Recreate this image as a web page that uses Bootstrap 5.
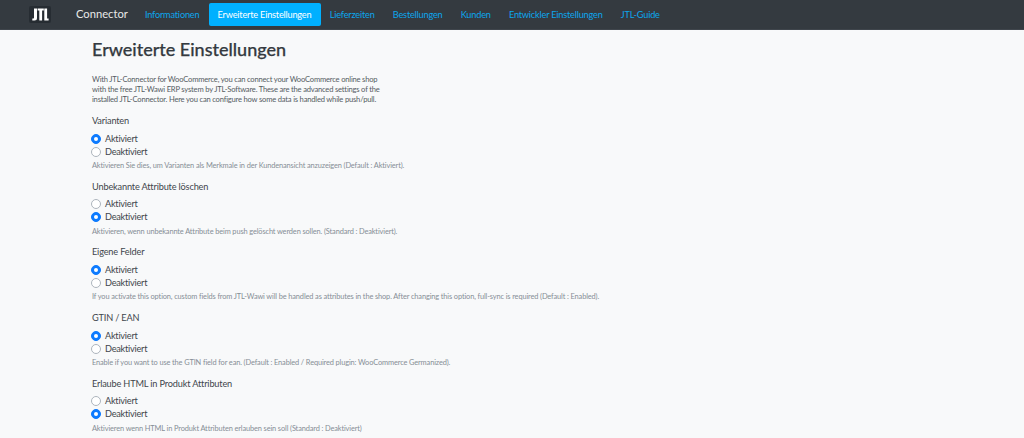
<!DOCTYPE html>
<html lang="de"><head><meta charset="utf-8"><title>Erweiterte Einstellungen</title>
<link href="https://cdn.jsdelivr.net/npm/bootstrap@5.3.0/dist/css/bootstrap.min.css" rel="stylesheet">
<style>
html,body{height:438px;overflow:hidden}
body{background:#f8f9fa;font-family:Lato,"Noto Sans",sans-serif;color:#212529;font-size:9px}
.topbar{background:#343a40;height:29.5px;padding:0 0 0 29px;border-bottom:1px solid #6c757d33}
.logo-mark{width:22px;height:17px;margin-right:25px}
.brand-txt{color:#e8e8e8;font-size:11.2px;margin-right:8px}
.topbar .nav-link{color:#0ca6ee;font-size:9.2px;letter-spacing:-.2px;padding:0 9.1px;height:23px;line-height:23px;border-radius:2px;white-space:nowrap}
.topbar .nav-link.active{background:#00b0ff;color:#fff}
.sheet{padding-left:92px}
.sheet h1{font-size:18px;font-weight:500;-webkit-text-stroke:.25px #343a40;margin:10px 0 16px;line-height:18px;color:#343a40}
.intro{font-size:7.6px;letter-spacing:-.2px;line-height:10.4px;color:#555c63;margin:0 0 10.5px}
.opt-group{margin-bottom:9.6px}
.opt-title{font-size:9.2px;letter-spacing:-.17px;line-height:12px;margin-bottom:5px;color:#3f464c}
.opt-row{display:flex;align-items:center;height:13px;font-size:9.2px;letter-spacing:-.25px;color:#3f464c}
.opt-row .form-check-input{width:10px;height:10px;margin:0 4px 0 -1px;flex:none;background-color:#fff;border:1px solid #adb5bd}
.opt-row .form-check-input:checked{background-color:#0d7bff;border-color:#0d7bff}
.opt-hint{font-size:7.4px;letter-spacing:-.12px;line-height:10px;color:#868e96;margin-top:3px}
</style></head><body>
<nav class="topbar d-flex align-items-center">
<svg class="logo-mark" viewBox="0 0 22 17"><rect width="22" height="17" rx="2" fill="#262c32"/><path fill="#fff" d="M5 2.500h3v9.500c0 1.700-.8 2.500-2.500 2.500H3.300v-2h1c.5 0 .7-.2.7-.7ZM8.600 2.500h6.200v2.100h-1.700v9.900h-2.800V4.600H8.600ZM15.300 2.500h2.800v9.900h1.500v2.100h-4.300Z"/></svg>
<span class="brand-txt">Connector</span>
<ul class="nav">
<li class="nav-item"><a class="nav-link" href="#">Informationen</a></li>
<li class="nav-item"><a class="nav-link active" href="#">Erweiterte Einstellungen</a></li>
<li class="nav-item"><a class="nav-link" href="#">Lieferzeiten</a></li>
<li class="nav-item"><a class="nav-link" href="#">Bestellungen</a></li>
<li class="nav-item"><a class="nav-link" href="#">Kunden</a></li>
<li class="nav-item"><a class="nav-link" href="#">Entwickler Einstellungen</a></li>
<li class="nav-item"><a class="nav-link" href="#">JTL-Guide</a></li>
</ul></nav>
<main class="sheet">
<h1>Erweiterte Einstellungen</h1>
<p class="intro">With JTL-Connector for WooCommerce, you can connect your WooCommerce online shop<br>with the free JTL-Wawi ERP system by JTL-Software. These are the advanced settings of the<br>installed JTL-Connector. Here you can configure how some data is handled while push/pull.</p>
<div class="opt-group"><div class="opt-title">Varianten</div>
<label class="opt-row"><input class="form-check-input" type="radio" name="a" checked>Aktiviert</label>
<label class="opt-row"><input class="form-check-input" type="radio" name="a">Deaktiviert</label>
<div class="opt-hint">Aktivieren Sie dies, um Varianten als Merkmale in der Kundenansicht anzuzeigen (Default : Aktiviert).</div></div>
<div class="opt-group"><div class="opt-title">Unbekannte Attribute löschen</div>
<label class="opt-row"><input class="form-check-input" type="radio" name="b">Aktiviert</label>
<label class="opt-row"><input class="form-check-input" type="radio" name="b" checked>Deaktiviert</label>
<div class="opt-hint">Aktivieren, wenn unbekannte Attribute beim push gelöscht werden sollen. (Standard : Deaktiviert).</div></div>
<div class="opt-group"><div class="opt-title">Eigene Felder</div>
<label class="opt-row"><input class="form-check-input" type="radio" name="c" checked>Aktiviert</label>
<label class="opt-row"><input class="form-check-input" type="radio" name="c">Deaktiviert</label>
<div class="opt-hint">If you activate this option, custom fields from JTL-Wawi will be handled as attributes in the shop. After changing this option, full-sync is required (Default : Enabled).</div></div>
<div class="opt-group"><div class="opt-title">GTIN / EAN</div>
<label class="opt-row"><input class="form-check-input" type="radio" name="d" checked>Aktiviert</label>
<label class="opt-row"><input class="form-check-input" type="radio" name="d">Deaktiviert</label>
<div class="opt-hint">Enable if you want to use the GTIN field for ean. (Default : Enabled / Required plugin: WooCommerce Germanized).</div></div>
<div class="opt-group"><div class="opt-title">Erlaube HTML in Produkt Attributen</div>
<label class="opt-row"><input class="form-check-input" type="radio" name="e">Aktiviert</label>
<label class="opt-row"><input class="form-check-input" type="radio" name="e" checked>Deaktiviert</label>
<div class="opt-hint">Aktivieren wenn HTML in Produkt Attributen erlauben sein soll (Standard : Deaktiviert)</div></div>
</main>
<script src="https://cdn.jsdelivr.net/npm/bootstrap@5.3.0/dist/js/bootstrap.bundle.min.js"></script>
</body></html>
